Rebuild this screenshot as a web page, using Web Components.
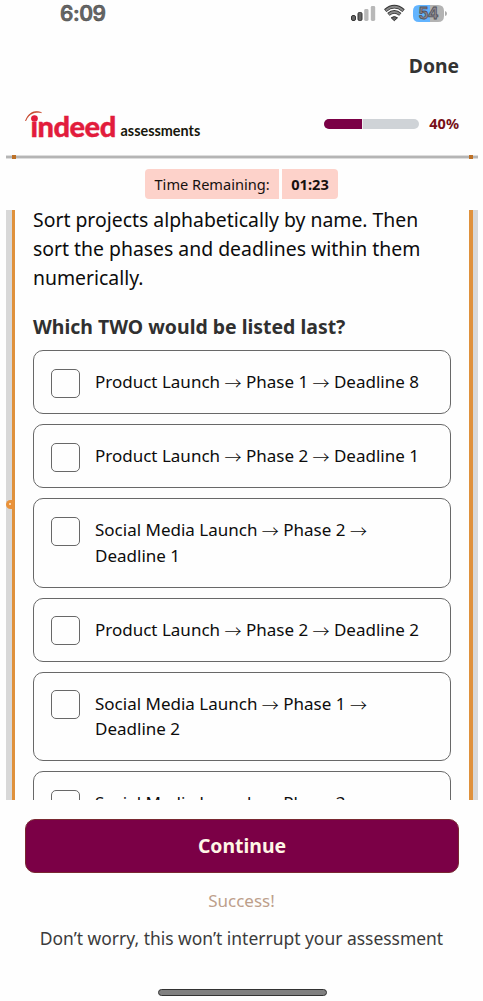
<!DOCTYPE html>
<html lang="en"><head><meta charset="utf-8"><title>Assessment</title>
<style>html,body{margin:0;padding:0;background:#fefefe}body{width:483px;height:1001px;overflow:hidden;font-family:"Noto Sans","Liberation Sans",sans-serif;color:#0c0c0c}</style></head>
<body><assessment-app></assessment-app>
<script>
const define=(name,html)=>customElements.define(name,class extends HTMLElement{
  constructor(){super();const t=document.createElement('template');t.innerHTML=html;this.attachShadow({mode:'open'}).append(t.content.cloneNode(true));}
});
define('status-bar',`<style>
:host{display:flex;height:32px;box-sizing:border-box;padding:0 36px 0 60px;align-items:flex-start}
.time{font:600 21px/28px Inter,sans-serif;color:#666;letter-spacing:-.5px;flex:1;-webkit-text-stroke:.5px #444}
svg{display:block}
</style><span class="time">6:09</span>
<svg width="96" height="27" viewBox="0 0 96 27">
<g stroke="#333" stroke-width="1" fill="#666"><rect x="3.5" y="15.5" width="4" height="5" rx="1.5"/><rect x="10" y="12.5" width="4" height="8" rx="1.3"/></g>
<rect x="16.2" y="9" width="4.3" height="12" rx="1.4" fill="#b8b8b8"/><rect x="22.8" y="6" width="4.4" height="15" rx="1.4" fill="#b8b8b8"/>
<g fill="none" stroke="#333" stroke-width="3.6"><path d="M37.2 10.6Q46.3 2.8 55.6 10.6M40.4 14.4Q46.3 9.4 52.3 14.4"/></g><g fill="none" stroke="#888" stroke-width="1.9"><path d="M37.7 10.4Q46.3 3.2 55.1 10.4M40.8 14.2Q46.3 9.7 51.9 14.2"/></g>
<path d="M43.2 17.8Q46.3 15.3 49.5 17.8L46.3 20.7Z" fill="#666" stroke="#333"/>
<path d="M71 5H82V22H71Q65 22 65 16V11Q65 5 71 5Z" fill="#62b4ff"/><path d="M82 5H90Q96 5 96 11V16Q96 22 90 22H82Z" fill="#b3b3b3"/>
<text x="80.6" y="19.2" text-anchor="middle" font-family="Inter" font-weight="700" font-size="15.5" textLength="20" fill="#8f8990" stroke="#505058" stroke-width=".8">54</text>
</svg><svg width="3" height="27"><path d="M1 11Q3 11.5 3 13.5T1 16Z" fill="#aaa"/></svg>`);
define('brand-logo',`<style>
:host{display:flex;align-items:flex-end;position:relative;height:32px}
.a{font:900 29px/32px Lato,sans-serif;color:#e21c3c;letter-spacing:-.5px;width:90px;padding-left:5.5px;box-sizing:content-box;-webkit-text-stroke:.4px #e21c3c;position:relative;top:-1px}
.b{font:700 14.4px/20px Lato,sans-serif;color:#17170c;position:relative;top:-2px}
svg{position:absolute;left:0;top:-1px}
</style><span class="a">indeed</span><span class="b">assessments</span>
<svg width="20" height="14"><path d="M.5 11C3 3 9-.3 16.5 2.6 9.5 1.2 4.2 3.6.5 11Z" fill="#c54226" stroke="#c54226" stroke-width=".6"/><circle cx="9.5" cy="8.5" r="3.3" fill="#e21c3c"/></svg>`);
define('progress-meter',`<style>
:host{display:flex;align-items:center;gap:10px}
.track{width:95px;height:10px;border-radius:5px;background:#cfd3d7;overflow:hidden}.fill{width:38px;height:10px;background:#7b0046;border-right:1px solid #eee}
b{font-size:14.5px;line-height:20px;color:#781018;margin-top:-2px}
</style><div class="track"><div class="fill"></div></div><b><slot></slot></b>`);
define('time-pill',`<style>
:host{display:flex;justify-content:center;gap:3px;height:30px;font-size:14.6px;line-height:30px;color:#17110f}
div{background:#fdd2ca;box-sizing:border-box}.l{width:134px;padding-left:9.5px;border-radius:4px 0 0 4px}.r{width:56px;text-align:center;font-weight:700;border-radius:0 4px 4px 0}
</style><div class="l"><slot></slot></div><div class="r"><slot name="time"></slot></div>`);
define('answer-option',`<style>
:host{display:flex;box-sizing:border-box;width:418px;border:1px solid #686868;border-radius:10px;padding:17px 17px 16px;gap:15px;flex:none;background:#fefefe}
i{width:29px;height:29px;box-sizing:border-box;border:1px solid #686868;border-radius:5px;flex:none;margin:.4px 0 -.4px}
span{font-size:17px;line-height:25.5px;height:25.5px;white-space:nowrap;padding:1px 0 2.5px}
:host([tall]) span{height:51px}
</style><i></i><span><slot></slot></span>`);
define('question-panel',`<style>
:host{display:flex;height:590px;margin:0 5px 0 6px;box-sizing:border-box;border:solid #d8d8d8;border-width:0 5px 0 6px;position:relative}
.in{flex:1;overflow:hidden;border:solid #df913c;border-width:0 4px 0 3px;padding-left:18px}
p{margin:0;margin-top:-5px;font-size:19.4px;line-height:29.2px;white-space:nowrap}
h2{margin:19.4px 0 9.4px;font-size:19.45px;line-height:29px;color:#303030;white-space:nowrap}
.list{display:flex;flex-direction:column;gap:10px}
.dot{position:absolute;left:-6px;top:290px;width:8px;height:9px;border-radius:5px 0 0 5px;background:#e9923a}
.dot:after{content:"";position:absolute;left:3px;top:3px;width:2px;height:2px;background:#f8d5ae}
</style><div class="in"><p><slot name="text"></slot></p><h2><slot name="ask"></slot></h2><div class="list"><slot></slot></div></div><div class="dot"></div>`);
define('app-button',`<style>
:host{display:block;height:54px;box-sizing:border-box;margin:0 24px 0 25px;border:1px solid #792831;border-radius:10px;background:#7b0046;color:#fff6e6;font-size:19.4px;font-weight:700;line-height:52px;text-align:center}
</style><slot></slot>`);
define('assessment-app',`<style>
:host{display:flex;flex-direction:column;height:1001px}
.done{height:68px;padding-right:24px;text-align:right;font-size:19.3px;font-weight:700;line-height:68px;color:#333}
header{height:55px;display:flex;justify-content:space-between;padding:11px 24px 0 25px;box-sizing:border-box}
progress-meter{height:26px}
.rule{height:4px;box-sizing:border-box;margin:0 5px 0 6px;border:1px solid #ddd;border-width:1px 0;background:#b5b5b5;display:flex;justify-content:space-between;padding:0 5px 0 6px}.rule i{width:4px;margin:-1px 0;background:#bd7127}
time-pill{margin:10px 0 11px}
.ar{font-family:"Noto Sans CJK SC",sans-serif;font-weight:300;line-height:0;vertical-align:-2px}
app-button{margin-top:19px;width:434px}
.ok{margin-top:15px;font-size:17px;line-height:25px;text-align:center;color:#bd9f8b}
.note{margin-top:12.6px;font-size:17.45px;line-height:25px;text-align:center;color:#3b3b3b;white-space:nowrap}
.home{width:169px;height:7px;box-sizing:border-box;border:1px solid #333;background:#808080;border-radius:4px;margin:38.4px 0 0 158px}
</style>
<status-bar></status-bar><div class="done">Done</div>
<header><brand-logo></brand-logo><progress-meter>40%</progress-meter></header>
<div class="rule"><i></i><i></i></div>
<time-pill>Time Remaining:<span slot="time">01:23</span></time-pill>
<question-panel><span slot="text">Sort projects alphabetically by name. Then<br>sort the phases and deadlines within them<br>numerically.</span><span slot="ask">Which TWO would be listed last?</span>
<answer-option>Product Launch → Phase 1 → Deadline 8</answer-option>
<answer-option>Product Launch → Phase 2 → Deadline 1</answer-option>
<answer-option tall>Social Media Launch → Phase 2 →<br>Deadline 1</answer-option>
<answer-option>Product Launch → Phase 2 → Deadline 2</answer-option>
<answer-option tall>Social Media Launch → Phase 1 →<br>Deadline 2</answer-option>
<answer-option tall>Social Media Launch → Phase 3 →</answer-option>
</question-panel>
<app-button>Continue</app-button><div class="ok">Success!</div><div class="note">Don’t worry, this won’t interrupt your assessment</div><div class="home"></div>`.replaceAll('→','<span class="ar">→</span>'));
</script></body></html>
